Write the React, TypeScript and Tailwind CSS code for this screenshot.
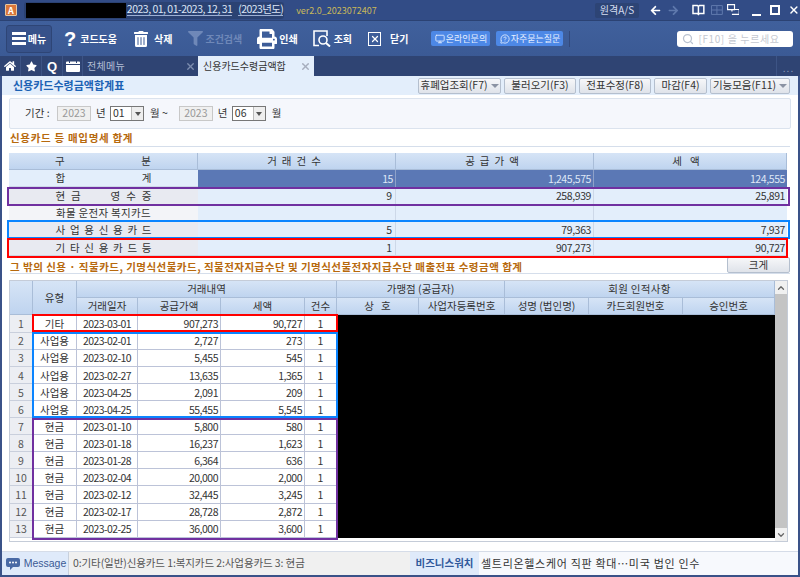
import { FaHome, FaStar, FaTrashAlt, FaFilter, FaPrint, FaArrowLeft, FaArrowRight } from "react-icons/fa";
import { Search, X, Monitor, ChevronUp, ChevronDown, MessageCircleQuestion } from "lucide-react";

const hdr = "flex items-center justify-center bg-linear-to-b from-[#d6e4f6] to-[#bfd4ef] border-r border-b border-[#a9bdd8] text-[#333] whitespace-nowrap";
const greyBtn = "flex items-center justify-center h-[16px] rounded-[2px] border border-[#b4bfce] bg-linear-to-b from-[#f6f7f9] to-[#dfe3ea] text-[#333] whitespace-nowrap";
const cell = "flex items-center pt-[2px] border-r border-b border-[#bcc3d8] text-[#333] bg-white whitespace-nowrap";

const summary = [
  { label: "현금 영수증", count: "9", supply: "258,939", tax: "25,891" },
  { label: "", count: "", supply: "", tax: "" },
  { label: "사업용신용카드", count: "5", supply: "79,363", tax: "7,937" },
  { label: "기타신용카드등", count: "1", supply: "907,273", tax: "90,727" },
];

const rows = [
  ["기타", "2023-03-01", "907,273", "90,727"],
  ["사업용", "2023-02-01", "2,727", "273"],
  ["사업용", "2023-02-10", "5,455", "545"],
  ["사업용", "2023-02-27", "13,635", "1,365"],
  ["사업용", "2023-04-25", "2,091", "209"],
  ["사업용", "2023-04-25", "55,455", "5,545"],
  ["현금", "2023-01-10", "5,800", "580"],
  ["현금", "2023-01-18", "16,237", "1,623"],
  ["현금", "2023-01-28", "6,364", "636"],
  ["현금", "2023-02-04", "20,000", "2,000"],
  ["현금", "2023-02-12", "32,445", "3,245"],
  ["현금", "2023-02-17", "28,728", "2,872"],
  ["현금", "2023-02-25", "36,000", "3,600"],
];

// spreads the characters of a label over the column, like the original's spaced headings
const Spread = ({ text }: { text: string }) => (
  <div className="flex w-[96px] justify-between">
    {text.split("").map((c, i) => (
      <span key={i} className="min-w-[2px]">{c}</span>
    ))}
  </div>
);

const ToolItem = ({ icon, label, className }: { icon: React.ReactNode; label: string; className: string }) => (
  <div className={"flex items-center font-bold text-[10px] " + className}>
    {icon}
    <span>{label}</span>
  </div>
);

const Caret = () => (
  <span className="ml-[3px] h-0 w-0 border-x-[4px] border-t-[4px] border-x-transparent border-t-[#8b93a3]" />
);

const Select = ({ value }: { value: string }) => (
  <div className="flex h-[15px] w-[34px] items-center justify-between border border-[#777] bg-white pl-[2px] text-[#333]">
    <span>{value}</span>
    <div className="flex h-full w-[12px] items-center justify-center border-l border-[#bbb] bg-[#eee]">
      <span className="h-0 w-0 border-x-[3px] border-t-[4px] border-x-transparent border-t-[#555]" />
    </div>
  </div>
);

const App = () => {
  return (
    <div className="flex h-[577px] w-[800px] flex-col overflow-hidden bg-[#3a5288] text-[11px] leading-none font-['Noto_Sans_CJK_KR','Liberation_Sans',sans-serif]">
      {/* title bar */}
      <div className="flex h-[20px] shrink-0 items-center bg-[#324c86] pl-[5px]">
        <div className="flex h-[12px] w-[12px] items-center justify-center rounded-[1px] border border-[#e8c8a0] bg-[#d9763a] text-[9px] font-bold text-[#fff]">A</div>
        <div className="ml-[7px] flex h-[17px] w-[264px] items-center rounded-[3px] bg-[#2b4273] whitespace-nowrap">
          <div className="ml-[2px] h-[15px] w-[100px] shrink-0 bg-black" />
          <span className="ml-[1px] border-b border-[#9db0d4] text-[10.5px] tracking-[-0.5px] text-[#dce5f5]">2023, 01, 01-2023, 12, 31</span>
          <span className="ml-[6px] border-b border-[#9db0d4] text-[10.5px] tracking-[-0.6px] text-[#dce5f5]">(2023년도)</span>
        </div>
        <span className="ml-[12px] whitespace-nowrap text-[9px] text-[#c9b95a]">ver2.0_2023072407</span>
        <div className="ml-[218px] flex h-[15px] w-[45px] items-center justify-center rounded-[2px] bg-[#2d4475] text-[10px] text-[#d5def0]">원격A/S</div>
        <FaArrowLeft className="ml-[11px] text-[11px] text-white" />
        <FaArrowRight className="ml-[7px] text-[11px] text-[#5f79ad]" />
        <svg className="ml-[13px]" width="13" height="12" viewBox="0 0 13 12" fill="none" stroke="#fff" strokeWidth="1.5">
          <path d="M1 1.5h4.5l1 1 1-1H12v8H7.5l-1 1-1-1H1zM6.5 2.5v7.5" />
        </svg>
        <svg className="ml-[6px]" width="12" height="10" viewBox="0 0 12 10" fill="none" stroke="#5f79ad">
          <path d="M.5.5h11v9H.5zM.5 5h11M6 .5v9" />
        </svg>
        <svg className="ml-[4px]" width="13" height="12" viewBox="0 0 13 12" fill="none" stroke="#fff" strokeWidth="1.2">
          <path d="M.6.6h7v5h-7zM5 7.5v-2h7.4v5H5" />
        </svg>
        <span className="ml-[13px] mt-[9px] h-[2px] w-[9px] bg-white" />
        <span className="ml-[9px] h-[10px] w-[10px] border-[2px] border-white" />
        <X className="ml-[8px] text-white" size={12} strokeWidth={3} />
      </div>

      {/* toolbar */}
      <div className="flex h-[36px] shrink-0 items-center border-t border-[#2b4273] bg-linear-to-b from-[#40609c] to-[#3b5a95] text-white">
        <div className="ml-[6px] flex h-[28px] w-[46px] items-center justify-center rounded-[3px] border border-[#2e4576] bg-[#37528a] text-[10px] font-bold">
          <div className="mr-[2px] flex flex-col gap-[2.5px]">
            <span className="block h-[2.5px] w-[14px] bg-white" />
            <span className="block h-[2.5px] w-[14px] bg-white" />
            <span className="block h-[2.5px] w-[14px] bg-white" />
          </div>
          메뉴
        </div>
        <ToolItem className="ml-[12px]" label="코드도움" icon={<span className="mr-[4px] font-['Liberation_Sans'] text-[20px] font-bold">?</span>} />
        <ToolItem className="ml-[16px]" label="삭제" icon={<FaTrashAlt className="mr-[5px] text-[16px]" />} />
        <ToolItem className="ml-[16px] text-[#6f88b8]" label="조건검색" icon={<FaFilter className="mr-[2px] text-[15px]" />} />
        <ToolItem className="ml-[15px]" label="인쇄" icon={<FaPrint className="mr-[2px] text-[20px]" />} />
        <ToolItem
          className="ml-[15px]"
          label="조회"
          icon={
            <svg className="mr-[3px]" width="18" height="17" viewBox="0 0 18 17" fill="none" stroke="#fff" strokeWidth="1.6">
              <path d="M6 15.5H1V1h13v5" />
              <circle cx="10" cy="10" r="4" />
              <path d="M13 13l4 3.5" strokeWidth="2" />
            </svg>
          }
        />
        <ToolItem
          className="ml-[16px]"
          label="닫기"
          icon={
            <span className="mr-[9px] flex h-[14px] w-[13px] items-center justify-center border-[1.5px] border-white">
              <X size={10} strokeWidth={3} />
            </span>
          }
        />
        <div className="ml-[23px] flex h-[15px] w-[59px] items-center justify-center gap-[1px] rounded-[2px] bg-[#4d88e6] text-[9px] text-[#e8f0ff]">
          <Monitor size={10} />온라인문의
        </div>
        <div className="ml-[6px] flex h-[15px] w-[67px] items-center justify-center gap-[1px] rounded-[2px] bg-[#4d88e6] text-[9px] text-[#e8f0ff]">
          <MessageCircleQuestion size={10} />자주묻는질문
        </div>
        <span className="ml-[6px] h-[16px] w-px bg-[#32497c]" />
        <div className="ml-[107px] flex h-[16px] w-[116px] items-center rounded-[3px] bg-white pl-[5px] text-[10px] tracking-[0.6px] text-[#c4c8d0]">
          <Search size={12} strokeWidth={2.5} className="mr-[4px] text-[#b9c2d0]" />
          [F10] 을 누르세요
        </div>
      </div>

      {/* tab strip */}
      <div className="flex h-[20px] shrink-0 items-stretch bg-[#2f4473] text-white">
        <div className="flex w-[21px] items-center justify-center border-r border-[#3d5485]"><FaHome className="text-[12px]" /></div>
        <div className="flex w-[21px] items-center justify-center border-r border-[#3d5485]"><FaStar className="text-[11px]" /></div>
        <div className="flex w-[21px] items-center justify-center border-r border-[#3d5485] font-['Liberation_Sans'] text-[13px] font-bold">Q</div>
        <div className="flex w-[20px] items-center justify-center border-r border-[#3d5485]">
          <svg width="14" height="11" viewBox="0 0 14 11" fill="#fff">
            <path d="M0 3V1.5A1 1 0 0 1 1 .5h2V2h1V.5h6V2h1V.5h2a1 1 0 0 1 1 1V3zM0 4h14v6a1 1 0 0 1-1 1H1a1 1 0 0 1-1-1z" />
          </svg>
        </div>
        <div className="flex w-[115px] items-center justify-between pl-[4px] pr-[2px] text-[10px] tracking-[0.3px] text-[#b3bfd6]">
          전체메뉴
          <X size={11} strokeWidth={3} className="text-[#7b8cae]" />
        </div>
        <div className="flex w-[116px] items-center justify-between bg-[#e3eefb] pl-[5px] pr-[3px] text-[10px] text-[#333]">
          신용카드수령금액합
          <X size={11} strokeWidth={3} className="text-[#a6adbd]" />
        </div>
        <div className="ml-auto flex w-[24px] items-center justify-center border-l border-[#3d5485] pt-[4px] text-[10px] tracking-[1px] text-[#8c9ab8]">...</div>
      </div>

      {/* page */}
      <div className="mx-[2px] flex min-h-0 flex-1 flex-col bg-white">
        <div className="flex h-[19px] shrink-0 items-center bg-[#e3eefb] pl-[11px] pr-[8px]">
          <span className="text-[11px] font-bold text-[#1c62b4]">신용카드수령금액합계표</span>
          <div className="ml-auto flex gap-[3px] text-[10.5px]">
            <div className={greyBtn + " w-[83px]"}>휴폐업조회(F7)<Caret /></div>
            <div className={greyBtn + " w-[72px]"}>불러오기(F3)</div>
            <div className={greyBtn + " w-[72px]"}>전표수정(F8)</div>
            <div className={greyBtn + " w-[53px]"}>마감(F4)</div>
            <div className={greyBtn + " w-[80px]"}>기능모음(F11)<Caret /></div>
          </div>
        </div>

        <div className="ml-[7px] mr-[7px] mt-[3px] flex h-[31px] shrink-0 items-center rounded-[2px] border border-[#dbe3ee] bg-[#f5f7fc] pl-[15px] text-[10.5px] text-[#333]">
          <span className="w-[32px]">기간 :</span>
          <span className="flex h-[15px] w-[34px] items-center justify-center border border-[#c8c8c8] bg-[#f0f0f0] text-[#999]">2023</span>
          <span className="ml-[5px] w-[14px]">년</span>
          <Select value="01" />
          <span className="ml-[6px]">월 ~</span>
          <span className="ml-[11px] flex h-[15px] w-[34px] items-center justify-center border border-[#c8c8c8] bg-[#f0f0f0] text-[#999]">2023</span>
          <span className="ml-[5px] w-[14px]">년</span>
          <Select value="06" />
          <span className="ml-[6px]">월</span>
        </div>

        <div className="ml-[8px] mr-[8px] mt-[3px] h-[15px] shrink-0 border-b border-[#d5deeb] pt-[1px] text-[10.5px] font-bold tracking-[0.7px] text-[#b7690d]">신용카드 등 매입명세 합계</div>

        {/* summary table */}
        <div className="relative ml-[7px] mt-[6px] grid w-[778px] shrink-0 grid-cols-[189px_198px_198px_193px] grid-rows-[17px_repeat(5,17.3px)] text-[10.5px]">
          <div className={hdr}><Spread text="구             분" /></div>
          <div className={hdr + " tracking-[5px]"}>거래건수</div>
          <div className={hdr + " tracking-[5px]"}>공급가액</div>
          <div className={hdr + " tracking-[8px]"}>세액</div>

          <div className="flex items-center justify-center border-b border-[#cdd8e8] bg-[#e3eefb] pt-[1px] text-[#333]"><Spread text="합             계" /></div>
          <div className="flex items-center justify-end border-r border-[#8ea1c9] bg-[#5b78b5] pr-[2px] pt-[1px] tracking-[-0.4px] text-[#dfe7f5]">15</div>
          <div className="flex items-center justify-end border-r border-[#8ea1c9] bg-[#5b78b5] pr-[2px] pt-[1px] tracking-[-0.4px] text-[#dfe7f5]">1,245,575</div>
          <div className="flex items-center justify-end bg-[#5b78b5] pr-[2px] pt-[1px] tracking-[-0.4px] text-[#dfe7f5]">124,555</div>

          {summary.map((r, i) => (
            <div key={i} className="contents">
              <div className={"flex items-center justify-center border-b border-[#cdd3e0] pt-[1px] text-[#333] " + (r.label ? "bg-[#e8eaf1]" : "bg-[#f3f4f8] tracking-[0.3px]")}>
                {r.label ? <Spread text={r.label === "현금 영수증" ? "현금   영수증" : r.label} /> : "화물 운전자 복지카드"}
              </div>
              <div className="flex items-center justify-end border-r border-b border-[#cdd8e8] bg-[#e3eefb] pr-[3px] pt-[1px] text-[#333]">{r.count}</div>
              <div className="flex items-center justify-end border-r border-b border-[#cdd8e8] bg-[#e3eefb] pr-[2px] pt-[1px] tracking-[-0.4px] text-[#333]">{r.supply}</div>
              <div className="flex items-center justify-end border-b border-[#cdd8e8] bg-[#e3eefb] pr-[2px] pt-[1px] tracking-[-0.4px] text-[#333]">{r.tax}</div>
            </div>
          ))}

          {/* coloured marks drawn over the screenshot */}
          <div className="absolute left-[-2px] top-[34px] h-[19px] w-[783px] border-[2px] border-[#7030a0]" />
          <div className="absolute left-[-2px] top-[67px] h-[19px] w-[783px] border-[2px] border-[#0a84ff]" />
          <div className="absolute left-[-2px] top-[85px] h-[20px] w-[781px] border-[2px] border-[#ff0000]" />
        </div>

        <div className="ml-[8px] mr-[8px] mt-[1px] flex h-[17px] shrink-0 items-center justify-between border-b border-[#d5deeb] text-[10.5px] font-bold text-[#b7690d]">
          <span className="mt-[3px] tracking-[0.48px] whitespace-nowrap">그 밖의 신용 · 직불카드, 기명식선불카드, 직불전자지급수단 및 기명식선불전자지급수단 매출전표 수령금액 합계</span>
          <div className={greyBtn + " w-[63px] font-normal"}>크게</div>
        </div>

        {/* detail grid */}
        <div className="relative ml-[7px] mt-[6px] flex h-[262px] w-[779px] shrink-0 border border-[#c5ccd8] text-[10.5px]">
          <div className="grid w-[765px] grid-cols-[23px_44px_61px_83px_84px_32px_82px_86px_84px_94px_92px] grid-rows-[17px_17px_repeat(13,17.1px)] content-start">
            <div className={hdr + " row-span-2"} />
            <div className={hdr + " row-span-2"}>유형</div>
            <div className={hdr + " col-span-4"}>거래내역</div>
            <div className={hdr + " col-span-2"}>가맹점 (공급자)</div>
            <div className={hdr + " col-span-3 tracking-[0.3px]"}>회원 인적사항</div>
            <div className={hdr}>거래일자</div>
            <div className={hdr}>공급가액</div>
            <div className={hdr}>세액</div>
            <div className={hdr}>건수</div>
            <div className={hdr + " whitespace-pre"}>상   호</div>
            <div className={hdr}>사업자등록번호</div>
            <div className={hdr}>성명 (법인명)</div>
            <div className={hdr}>카드회원번호</div>
            <div className={hdr}>승인번호</div>

            {rows.map((r, i) => (
              <div key={i} className="contents">
                <div className="col-start-1 flex items-center justify-center border-r border-b border-[#c9cfdc] bg-[#eceef3] pt-[2px] text-[#555]">{i + 1}</div>
                <div className={cell + " justify-center"}>{r[0]}</div>
                <div className={cell + " justify-center tracking-[-0.6px]"}>{r[1]}</div>
                <div className={cell + " justify-end pr-[2px] tracking-[-0.5px]"}>{r[2]}</div>
                <div className={cell + " justify-end pr-[2px] tracking-[-0.5px]"}>{r[3]}</div>
                <div className={cell + " justify-center"}>1</div>
              </div>
            ))}
            <div className="col-span-5 col-start-7 row-span-13 row-start-3 bg-black" />
          </div>

          {/* scrollbar */}
          <div className="flex w-[13px] flex-col bg-[#c4c4c4] text-[#666]">
            <div className="flex h-[13px] items-center justify-center bg-[#f0f0f0]"><ChevronUp size={10} strokeWidth={3} /></div>
            <div className="flex-1" />
            <div className="flex h-[13px] items-center justify-center bg-[#f0f0f0]"><ChevronDown size={10} strokeWidth={3} /></div>
          </div>

          <div className="absolute left-[22px] top-[33px] h-[18px] w-[306px] border-[2px] border-[#ff0000]" />
          <div className="absolute left-[22px] top-[51px] h-[86px] w-[306px] border-[2px] border-[#0a84ff]" />
          <div className="absolute left-[22px] top-[137px] h-[122px] w-[306px] border-[2px] border-[#7030a0]" />
        </div>

        {/* status bar */}
        <div className="mt-auto flex h-[24px] shrink-0 items-stretch border-t border-[#d5dce8] text-[10.5px]">
          <div className="flex w-[66px] items-center justify-center gap-[4px] bg-[#dfeafa] pl-[2px] font-['Liberation_Sans'] text-[10.5px] text-[#3b5a95]">
            <svg width="14" height="12" viewBox="0 0 14 12" fill="#4a6aa5">
              <path d="M2 0h10a2 2 0 0 1 2 2v5a2 2 0 0 1-2 2H7l-3 3V9H2a2 2 0 0 1-2-2V2a2 2 0 0 1 2-2z" />
              <circle cx="4" cy="4.5" r="1" fill="#fff" />
              <circle cx="7" cy="4.5" r="1" fill="#fff" />
              <circle cx="10" cy="4.5" r="1" fill="#fff" />
            </svg>
            Message
          </div>
          <div className="flex w-[342px] items-center border-l border-[#c8d0dc] bg-[#f0f0f0] pl-[4px] tracking-[-0.1px] text-[#555]">0:기타(일반)신용카드 1:복지카드 2:사업용카드 3: 현금</div>
          <div className="flex w-[69px] items-center justify-center bg-[#dfeafa] font-bold text-[#31599c]">비즈니스워치</div>
          <div className="flex flex-1 items-center bg-[#f7f9fd] pl-[2px] tracking-[0.7px] whitespace-nowrap text-[11px] text-[#333]">셀트리온헬스케어 직판 확대…미국 법인 인수</div>
        </div>
      </div>
      <div className="h-[2px] shrink-0" />
    </div>
  );
};

export default App;
